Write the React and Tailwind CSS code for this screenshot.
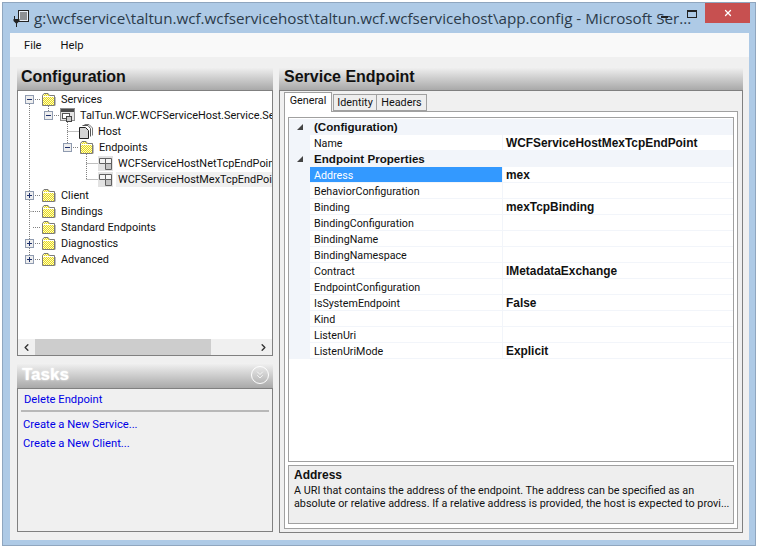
import { ChevronLeft, ChevronRight, ChevronsDown, X } from "lucide-react";

const FolderIcon = () => (
  <svg width="15" height="14" viewBox="0 0 15 14" className="shrink-0">
    <defs>
      <pattern id="dither" width="2" height="2" patternUnits="userSpaceOnUse">
        <rect width="2" height="2" fill="#fffcc0" />
        <rect width="1" height="1" fill="#e6d820" />
        <rect x="1" y="1" width="1" height="1" fill="#e6d820" />
      </pattern>
    </defs>
    <path d="M1.5 13.5V3.5L3 1.5H7L8.5 3.5H13.5V13.5Z" fill="url(#dither)" stroke="#7a7a7a" />
    <path d="M2 4.5H13" stroke="#fff" />
    <path d="M14.5 5V13.5" stroke="#c0c0c0" />
  </svg>
);

const ServiceIcon = () => (
  <svg width="15" height="15" viewBox="0 0 15 15" className="shrink-0">
    <rect x="0.5" y="0.5" width="14" height="12" fill="#e4e4e4" stroke="#8c8c8c" />
    <rect x="1" y="1" width="13" height="3" fill="#4a4a4a" />
    <rect x="2.5" y="5.5" width="7" height="5" fill="#fff" stroke="#555" />
    <rect x="6.5" y="8.5" width="5" height="5" fill="#ccc" stroke="#444" />
  </svg>
);

const HostIcon = () => (
  <svg width="14" height="15" viewBox="0 0 14 15" className="shrink-0">
    <path d="M5.5 .5H10L13.5 4V11.5" fill="none" stroke="#777" />
    <path d="M3.5 1.5H9L11.5 4.5V12.5" fill="none" stroke="#555" />
    <path d="M.5 3.5H6.5L9.5 6.5V14.5H.5Z" fill="#d4d4d4" stroke="#222" />
  </svg>
);

const EndpointIcon = () => (
  <svg width="15" height="15" viewBox="0 0 15 15" className="shrink-0">
    <rect x="0" y="0" width="15" height="15" fill="#e2e2e2" />
    <path d="M1.5 2.5H13.5V13.5H7.5V7.5H1.5Z" fill="#f4f4f4" stroke="#606060" />
    <rect x="8" y="8" width="5" height="5" fill="#c4c4c4" />
    <path d="M7.5 2.5V7.5H13.5" stroke="#606060" fill="none" />
  </svg>
);

const PlugIcon = () => (
  <svg width="16" height="18" viewBox="0 0 16 18" className="shrink-0">
    <rect x="5.5" y="0.5" width="10" height="11" fill="#e8eef6" stroke="#222" />
    <path d="M7 3H14M7 5H14M7 7H14M7 9H14" stroke="#333" />
    <path d="M1 6V9H0.5V11L3 13.5V17H4V13.5L6.5 11V9H6V6H5V9H2V6Z" fill="#222" />
  </svg>
);

// dotted connector lines of the tree, coordinates relative to the tree box
const TreeLines = () => (
  <svg width="254" height="180" className="absolute left-0 top-0" fill="none" stroke="#808080" strokeDasharray="1 1">
    <path d="M11.5 13V167" />
    <path d="M15 8.5H23M15 104.5H23M15 120.5H23M15 136.5H23M15 152.5H23M15 168.5H23" />
    <path d="M11.5 120.5H15" />
    <path d="M30.5 13V20" />
    <path d="M34 24.5H42" />
    <path d="M49.5 29V56" />
    <path d="M49.5 40.5H61M53 56.5H61" />
    <path d="M68.5 61V88" />
    <path d="M68.5 72.5H81M68.5 88.5H81" />
  </svg>
);

const Expander = ({ open }) => (
  <span className="flex h-[9px] w-[9px] shrink-0 items-center justify-center border border-[#8f9bb0] bg-[#eeeeee]">
    <span className="relative block h-[1px] w-[5px] bg-[#1c2f6b]">
      {!open && <span className="absolute left-[2px] top-[-2px] block h-[5px] w-[1px] bg-[#1c2f6b]" />}
    </span>
  </span>
);

const treeRows = [
  { level: 0, label: "Services", icon: FolderIcon, exp: "open" },
  { level: 1, label: "TalTun.WCF.WCFServiceHost.Service.Service1", icon: ServiceIcon, exp: "open" },
  { level: 2, label: "Host", icon: HostIcon },
  { level: 2, label: "Endpoints", icon: FolderIcon, exp: "open" },
  { level: 3, label: "WCFServiceHostNetTcpEndPoint", icon: EndpointIcon },
  { level: 3, label: "WCFServiceHostMexTcpEndPoint", icon: EndpointIcon, selected: true },
  { level: 0, label: "Client", icon: FolderIcon, exp: "closed" },
  { level: 0, label: "Bindings", icon: FolderIcon },
  { level: 0, label: "Standard Endpoints", icon: FolderIcon },
  { level: 0, label: "Diagnostics", icon: FolderIcon, exp: "closed" },
  { level: 0, label: "Advanced", icon: FolderIcon, exp: "closed" },
];

const indents = ["pl-[7px]", "pl-[26px]", "pl-[45px]", "pl-[64px]"];

const TreeRow = ({ row }) => {
  const Icon = row.icon;
  return (
    <div className={`relative flex h-4 items-center whitespace-nowrap text-[10.9px] ${indents[row.level]}`}>
      <span className="flex w-[16px] shrink-0 items-center">
        {row.exp && <Expander open={row.exp === "open"} />}
      </span>
      <Icon />
      <span className={`ml-[3px] h-[15px] pl-[2px] leading-[15px] ${row.selected ? "flex-1 bg-[#f0f0f0]" : ""}`}>
        {row.label}
      </span>
    </div>
  );
};

const PanelHeader = ({ children, right }) => (
  <div
    className={`flex h-[23px] shrink-0 items-center bg-gradient-to-b from-[#f2f2f2] to-[#a9a9a9] pb-[3px] font-['Liberation_Sans',sans-serif] text-[16px] font-bold text-[#111111] ${
      right ? "pl-[5px]" : "pl-[4px]"
    }`}
  >
    {children}
  </div>
);

const gridRows = [
  { section: "(Configuration)" },
  { name: "Name", value: "WCFServiceHostMexTcpEndPoint" },
  { section: "Endpoint Properties" },
  { name: "Address", value: "mex", selected: true },
  { name: "BehaviorConfiguration" },
  { name: "Binding", value: "mexTcpBinding" },
  { name: "BindingConfiguration" },
  { name: "BindingName" },
  { name: "BindingNamespace" },
  { name: "Contract", value: "IMetadataExchange" },
  { name: "EndpointConfiguration" },
  { name: "IsSystemEndpoint", value: "False" },
  { name: "Kind" },
  { name: "ListenUri" },
  { name: "ListenUriMode", value: "Explicit" },
];

const GridRow = ({ row }) => {
  if (row.section) {
    return (
      <div className="flex h-4 items-center bg-[#f2f5fa] font-['Liberation_Sans',sans-serif] text-[11.6px] font-bold">
        <span className="w-[25px] pl-[8px]">
          <span className="block h-0 w-0 border-b-[6px] border-l-[6px] border-b-[#444444] border-l-transparent" />
        </span>
        <span>{row.section}</span>
      </div>
    );
  }
  return (
    <div className="flex h-4 bg-[#f2f5fa]">
      <div className="w-[21px] shrink-0" />
      <div
        className={`flex h-[15px] w-[192px] shrink-0 items-center pl-[4px] pt-[3px] text-[10.7px] ${
          row.selected ? "bg-[#3399ff] text-white" : "bg-white"
        }`}
      >
        {row.name}
      </div>
      <div className="ml-[1px] flex h-[15px] flex-1 items-center bg-white pl-[3px] pt-[2px] font-['Liberation_Sans',sans-serif] text-[11.9px] font-bold">
        {row.value}
      </div>
    </div>
  );
};

export default function App() {
  return (
    <div className="h-[547px] w-[758px] overflow-hidden bg-white font-['Roboto',sans-serif] text-[11.2px] text-[#111111]">
      <div className="ml-[2px] mt-[2px] flex h-[544px] w-[754px] flex-col border border-[#8fa6bf] bg-[#aecae6]">
        {/* title bar */}
        <div className="flex h-[30px] shrink-0 items-start">
          <span className="ml-[10px] mt-[7px]">
            <PlugIcon />
          </span>
          <span className="ml-[5px] mt-[3px] w-[613px] whitespace-nowrap font-['Open_Sans',sans-serif] text-[15.2px] leading-[24px] text-[#2b3a4a]">
            {"g:\\wcfservice\\taltun.wcf.wcfservicehost\\taltun.wcf.wcfservicehost\\app.config - Microsoft Ser..."}
          </span>
          <span className="ml-[14px] mt-[13px] block h-[2px] w-[7px] bg-[#222222]" />
          <span className="ml-[19px] mt-[7px] block h-[8px] w-[10px] border border-t-2 border-[#222222]" />
          <span className="ml-[8px] flex h-[20px] w-[45px] items-center justify-center bg-[#c75050] text-white">
            <X size={10} strokeWidth={3} />
          </span>
        </div>

        <div className="ml-[7px] flex h-[507px] w-[739px] flex-col bg-[#f0f0f0]">
          {/* menu bar */}
          <div className="flex h-[24px] shrink-0 items-center gap-[19px] bg-[#f9f9f9] pl-[14px] pt-[2px]">
            <span>File</span>
            <span>Help</span>
          </div>

          <div className="flex min-h-0 flex-1 gap-[6px] pl-[7px] pt-[10px]">
            {/* left column */}
            <div className="flex w-[256px] shrink-0 flex-col">
              <PanelHeader>Configuration</PanelHeader>
              <div className="flex h-[266px] shrink-0 flex-col border border-[#808080] bg-white">
                <div className="relative min-h-0 flex-1 overflow-hidden">
                  <TreeLines />
                  {treeRows.map((row) => (
                    <TreeRow key={row.label} row={row} />
                  ))}
                </div>
                <div className="flex h-[16px] shrink-0 items-center bg-[#f0f0f0] text-[#333333]">
                  <span className="flex w-[17px] justify-center">
                    <ChevronLeft size={11} strokeWidth={3} />
                  </span>
                  <span className="h-full w-[176px] bg-[#cdcdcd]" />
                  <span className="ml-auto flex w-[17px] justify-center">
                    <ChevronRight size={11} strokeWidth={3} />
                  </span>
                </div>
              </div>

              <div className="mt-[7px] flex h-[25px] shrink-0 items-center justify-between bg-gradient-to-b from-[#f2f2f2] to-[#a9a9a9] pb-[2px] pl-[5px] pr-[4px] font-['Liberation_Sans',sans-serif] text-[17px] font-bold text-white [text-shadow:0_0_2px_#ffffff]">
                <span>Tasks</span>
                <span className="flex h-[18px] w-[18px] items-center justify-center rounded-full border border-white">
                  <ChevronsDown size={12} strokeWidth={1.5} />
                </span>
              </div>
              <div className="flex h-[144px] shrink-0 flex-col border border-[#808080] text-[#0000e6]">
                <div className="flex h-[21px] items-center pl-[6px] pt-[1px]">Delete Endpoint</div>
                <div className="mx-[3px] h-[2px] bg-[#b8b8b8]" />
                <div className="mt-[5px] flex h-[16px] items-center pl-[5px]">Create a New Service...</div>
                <div className="mt-[3px] flex h-[16px] items-center pl-[5px]">Create a New Client...</div>
              </div>
            </div>

            {/* right column */}
            <div className="flex w-[464px] shrink-0 flex-col">
              <PanelHeader right>Service Endpoint</PanelHeader>
              <div className="flex h-[443px] shrink-0 flex-col border border-[#808080] px-[4px] pb-[3px] text-[10.8px]">
                <div className="flex h-[20px] shrink-0 items-end">
                  <span className="z-10 -mb-[1px] flex h-[20px] w-[48px] items-center justify-center border border-b-0 border-[#a0a0a0] bg-white pb-[2px]">General</span>
                  <span className="ml-[1px] flex h-[17px] w-[44px] items-center justify-center border border-[#a0a0a0] bg-[#eeeeee] pt-[1px]">Identity</span>
                  <span className="flex h-[17px] w-[50px] items-center justify-center border border-l-0 border-[#a0a0a0] bg-[#eeeeee] pt-[1px]">Headers</span>
                </div>
                <div className="flex min-h-0 flex-1 flex-col border border-[#a0a0a0] bg-white px-[3px] pb-[4px] pt-[5px]">
                  <div className="min-h-0 flex-1 border border-[#a0a0a0] bg-white pt-[1px]">
                    {gridRows.map((row) => (
                      <GridRow key={row.section || row.name} row={row} />
                    ))}
                  </div>
                  <div className="mt-[3px] h-[59px] shrink-0 border border-[#a0a0a0] bg-[#eeeeee] pl-[5px] pt-[2px] leading-[13px]">
                    <div className="mb-[1px] font-['Liberation_Sans',sans-serif] text-[12px] font-bold leading-[15px]">Address</div>
                    <div className="whitespace-nowrap">A URI that contains the address of the endpoint. The address can be specified as an</div>
                    <div className="whitespace-nowrap">absolute or relative address. If a relative address is provided, the host is expected to provi...</div>
                  </div>
                </div>
              </div>
            </div>
          </div>
        </div>
      </div>
    </div>
  );
}
